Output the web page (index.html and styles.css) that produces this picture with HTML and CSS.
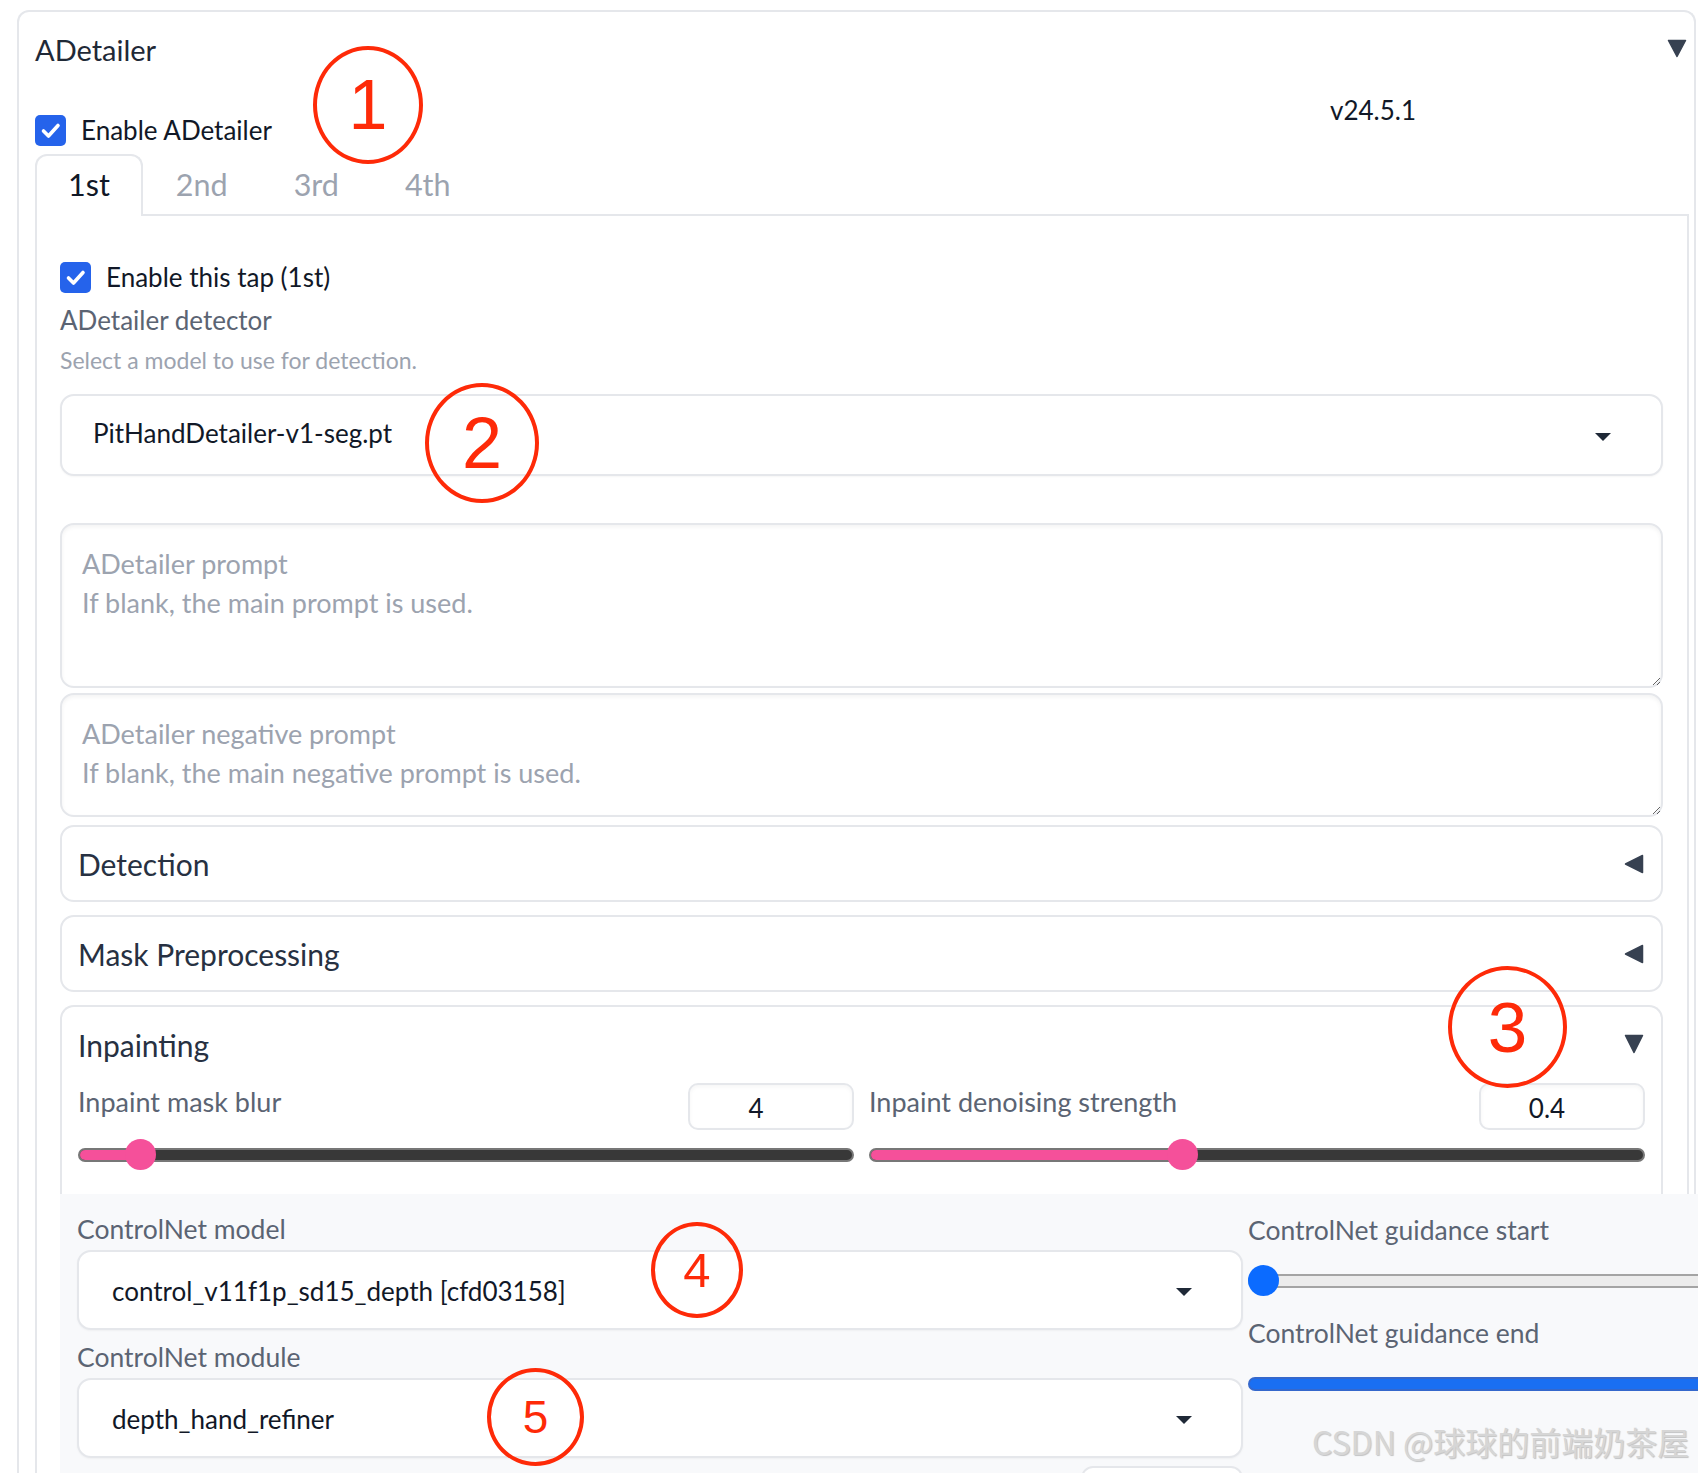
FILE: index.html
```html
<!DOCTYPE html>
<html lang="en">
<head>
<meta charset="utf-8">
<title>ADetailer</title>
<link rel="stylesheet" href="styles.css">
</head>
<body>
<div class="page">
  <section class="panel">
    <header class="panel-head">
      <h2 class="panel-title">ADetailer</h2>
      <svg class="tri tri-head" viewBox="0 0 20 20"><path d="M1.5 2.5 H18.5 L10 18.5 Z"/></svg>
    </header>

    <div class="enable-row">
      <label class="check check-main">
        <span class="box"><svg viewBox="0 0 31 31"><path d="M8.5 16 L13.5 21 L23 10.5"/></svg></span>
        <span class="check-text">Enable ADetailer</span>
      </label>
      <div class="version">v24.5.1</div>
    </div>

    <div class="tabs">
      <nav class="tab-nav">
        <button class="tab active">1st</button>
        <button class="tab">2nd</button>
        <button class="tab">3rd</button>
        <button class="tab">4th</button>
      </nav>

      <div class="tab-body">
        <label class="check">
          <span class="box"><svg viewBox="0 0 31 31"><path d="M8.5 16 L13.5 21 L23 10.5"/></svg></span>
          <span class="check-text">Enable this tap (1st)</span>
        </label>

        <div class="field-label">ADetailer detector</div>
        <div class="info">Select a model to use for detection.</div>

        <div class="dropdown dropdown-main">
          <span class="dropdown-value">PitHandDetailer-v1-seg.pt</span>
          <svg class="caret" viewBox="0 0 16 8"><path d="M0 0 H16 L8 8 Z"/></svg>
        </div>

        <textarea class="prompt tall" placeholder="ADetailer prompt&#10;If blank, the main prompt is used."></textarea>
        <textarea class="prompt short" placeholder="ADetailer negative prompt&#10;If blank, the main negative prompt is used."></textarea>

        <div class="acc acc-detect">
          <div class="acc-head">
            <span class="acc-title">Detection</span>
            <svg class="tri" viewBox="0 0 20 20"><path d="M18.5 1.5 V18.5 L1.5 10 Z"/></svg>
          </div>
        </div>

        <div class="acc acc-mask">
          <div class="acc-head">
            <span class="acc-title">Mask Preprocessing</span>
            <svg class="tri" viewBox="0 0 20 20"><path d="M18.5 1.5 V18.5 L1.5 10 Z"/></svg>
          </div>
        </div>

        <div class="acc acc-inpaint">
          <div class="acc-head">
            <span class="acc-title">Inpainting</span>
            <svg class="tri" viewBox="0 0 20 20"><path d="M1.5 1.5 H18.5 L10 18.5 Z"/></svg>
          </div>
          <div class="acc-body">
            <div class="num-field">
              <div class="num-head">
                <span class="slider-label">Inpaint mask blur</span>
                <div class="num-box">4</div>
              </div>
              <div class="slider pink" style="--p:0.0625">
                <div class="track"><div class="fill"></div></div>
                <div class="thumb"></div>
              </div>
            </div>
            <div class="num-field">
              <div class="num-head">
                <span class="slider-label">Inpaint denoising strength</span>
                <div class="num-box">0.4</div>
              </div>
              <div class="slider pink" style="--p:0.4">
                <div class="track"><div class="fill"></div></div>
                <div class="thumb"></div>
              </div>
            </div>
          </div>
        </div>

        <div class="cn">
          <div class="cn-left">
            <div class="cn-label">ControlNet model</div>
            <div class="dropdown dropdown-cn">
              <span class="dropdown-value">control_v11f1p_sd15_depth [cfd03158]</span>
              <svg class="caret" viewBox="0 0 16 8"><path d="M0 0 H16 L8 8 Z"/></svg>
            </div>
            <div class="cn-label cn-label-2">ControlNet module</div>
            <div class="dropdown dropdown-cn">
              <span class="dropdown-value">depth_hand_refiner</span>
              <svg class="caret" viewBox="0 0 16 8"><path d="M0 0 H16 L8 8 Z"/></svg>
            </div>
            <div class="cn-tail"><div class="cn-small-box"></div></div>
          </div>
          <div class="cn-right">
            <div class="cn-label cn-label-r">ControlNet guidance start</div>
            <div class="slider blue-start" style="--p:0">
              <div class="track"><div class="fill"></div></div>
              <div class="thumb"></div>
            </div>
            <div class="cn-label cn-label-r cn-label-end">ControlNet guidance end</div>
            <div class="slider blue-end" style="--p:1">
              <div class="track"><div class="fill"></div></div>
              <div class="thumb"></div>
            </div>
          </div>
        </div>
      </div>
    </div>
  </section>
</div>

<div class="mark mark-1"><span>1</span></div>
<div class="mark mark-2"><span>2</span></div>
<div class="mark mark-3"><span>3</span></div>
<div class="mark mark-4"><span>4</span></div>
<div class="mark mark-5"><span>5</span></div>

<div class="watermark">CSDN @球球的前端奶茶屋</div>
</body>
</html>
```

FILE: styles.css
```css
* { box-sizing: border-box; }

html, body {
  margin: 0;
  padding: 0;
  overflow: hidden;
}

body {
  position: relative;
  width: 1698px;
  height: 1473px;
  background: #ffffff;
  font-family: Lato, "Noto Sans CJK SC", sans-serif;
  color: #111827;
}

.page {
  height: 1473px;
  overflow: hidden;
  padding: 10px 2px 0 17px;
}

.panel {
  border: 2px solid #e5e7eb;
  border-bottom: 0;
  border-radius: 12px 12px 0 0;
  padding: 12px 5px 0 16px;
  min-height: 1520px;
}

.panel-head {
  display: flex;
  align-items: center;
  justify-content: space-between;
  height: 44px;
}

.panel-title {
  margin: 0;
  padding-top: 8px;
  font-size: 29px;
  font-weight: 400;
  line-height: 36px;
  color: #1f2937;
}

.tri {
  width: 20px;
  height: 20px;
  flex: none;
  fill: #374151;
  stroke: #374151;
  stroke-width: 1.5;
  stroke-linejoin: round;
}

.tri-head {
  margin: 4px 2px 0 0;
}

.enable-row {
  display: flex;
  justify-content: space-between;
  align-items: flex-start;
  margin-top: 22px;
}

.check {
  display: flex;
  align-items: flex-start;
  gap: 15px;
}

.check-main {
  margin-top: 25px;
}

.box {
  width: 31px;
  height: 31px;
  flex: none;
  border-radius: 5px;
  background: #2563eb;
  display: flex;
  align-items: center;
  justify-content: center;
}

.box svg {
  width: 31px;
  height: 31px;
  fill: none;
  stroke: #ffffff;
  stroke-width: 3.6;
  stroke-linecap: round;
  stroke-linejoin: round;
}

.check-text {
  font-size: 26px;
  line-height: 31px;
  color: #111827;
}

.version {
  width: 359px;
  padding-top: 4px;
  font-size: 26px;
  line-height: 32px;
  color: #111827;
}

.tabs {
  margin-top: 8px;
}

.tab-nav {
  display: flex;
  border-bottom: 2px solid #e5e7eb;
}

.tab {
  height: 62px;
  margin: 0 0 -2px 0;
  padding: 0 31px 4px;
  border: 2px solid transparent;
  border-bottom: 0;
  background: transparent;
  font-family: inherit;
  font-size: 30.5px;
  line-height: 40px;
  color: #9ca3af;
  display: flex;
  align-items: center;
}

.tab.active {
  border-color: #e5e7eb;
  border-radius: 12px 12px 0 0;
  background: #ffffff;
  color: #111827;
}

.tab-body {
  border: 2px solid #e5e7eb;
  border-top: 0;
  padding: 46px 24px 0 23px;
  min-height: 1400px;
}

.field-label {
  margin-top: 7px;
  padding-top: 4px;
  font-size: 26px;
  line-height: 32px;
  color: #5b6473;
}

.info {
  margin-top: 6px;
  padding-top: 6px;
  font-size: 23px;
  line-height: 24px;
  color: #9ca3af;
}

.dropdown {
  border: 2px solid #e5e7eb;
  border-radius: 14px;
  background: #ffffff;
  box-shadow: 0 1px 2px rgba(0, 0, 0, 0.04);
  display: flex;
  align-items: center;
  justify-content: space-between;
}

.dropdown-main {
  margin-top: 22px;
  height: 82px;
  padding: 0 50px 0 31px;
}

.dropdown-value {
  font-size: 26px;
  line-height: 36px;
  margin-bottom: 4px;
  color: #111827;
}

.caret {
  width: 16px;
  height: 8px;
  flex: none;
  margin-top: 4px;
  fill: #1f2937;
}

.prompt {
  display: block;
  width: 100%;
  margin: 47px 0 0 0;
  height: 165px;
  padding: 19px 17px 0 20px;
  border: 2px solid #e5e7eb;
  border-radius: 14px;
  font-family: inherit;
  font-size: 27px;
  line-height: 39px;
  color: #111827;
  background: #ffffff;
  box-shadow: inset 0 2px 4px rgba(0, 0, 0, 0.05);
  resize: vertical;
  outline: none;
}

.prompt::placeholder {
  color: #9ca3af;
}

.prompt.short {
  margin-top: 5px;
  height: 124px;
}

.acc {
  border: 2px solid #e5e7eb;
  border-radius: 14px;
  background: #ffffff;
}

.acc-detect { margin-top: 8px; }
.acc-mask { margin-top: 13px; }

.acc-inpaint {
  margin-top: 13px;
  border-bottom: 0;
  border-radius: 14px 14px 0 0;
}

.acc-head {
  height: 73px;
  display: flex;
  align-items: center;
  justify-content: space-between;
  padding: 0 17px 0 16px;
}

.acc-title {
  font-size: 30px;
  line-height: 40px;
  color: #273142;
}

.acc-inpaint .acc-title {
  margin-top: 2px;
}

.acc-body {
  display: grid;
  grid-template-columns: 1fr 1fr;
  column-gap: 15px;
  padding: 3px 16px 24px;
}

.num-head {
  display: flex;
  justify-content: space-between;
  align-items: flex-start;
}

.slider-label {
  padding-top: 2px;
  font-size: 27px;
  line-height: 34px;
  color: #5b6473;
}

.num-box {
  width: 166px;
  height: 47px;
  border: 2px solid #e5e7eb;
  border-radius: 10px;
  background: #ffffff;
  box-shadow: inset 0 2px 4px rgba(0, 0, 0, 0.04);
  display: flex;
  align-items: center;
  justify-content: center;
  padding: 2px 30px 0 0;
  font-size: 26px;
  line-height: 34px;
  color: #111827;
}

.slider {
  position: relative;
  height: 31px;
  display: flex;
  align-items: center;
  margin-top: 9px;
}

.track {
  flex: 1;
  height: 14px;
  border-radius: 7px;
  border: 2px solid #777777;
  background: #383838;
  overflow: hidden;
}

.fill {
  height: 100%;
  width: calc(15.5px + (100% - 31px) * var(--p));
}

.thumb {
  position: absolute;
  top: 0;
  left: calc((100% - 31px) * var(--p));
  width: 31px;
  height: 31px;
  border-radius: 50%;
}

.pink .fill,
.pink .thumb {
  background: #f5509a;
}

.cn {
  margin-right: -100px;
  background: #f8f9fb;
  padding: 15px 0 0 17px;
  display: grid;
  grid-template-columns: 1166px 1fr;
  column-gap: 5px;
  height: 320px;
}

.cn-label {
  padding-top: 4px;
  font-size: 26.5px;
  line-height: 32px;
  color: #5b6473;
}

.cn-label-r {
  padding-top: 6px;
  line-height: 30px;
}

.cn-label-2 {
  margin-top: 7px;
}

.dropdown-cn {
  margin-top: 5px;
  height: 80px;
  padding: 0 49px 0 33px;
}

.dropdown-cn .dropdown-value {
  margin: 2px 0 0 0;
}

.cn-tail {
  display: flex;
  justify-content: flex-end;
  margin-top: 8px;
}

.cn-small-box {
  width: 162px;
  height: 50px;
  border: 2px solid #e5e7eb;
  border-radius: 12px;
  background: #ffffff;
}

.cn-right .slider {
  margin-top: 20px;
}

.cn-label-end {
  margin-top: 16px;
}

.blue-start .track {
  border-color: #a4a4a4;
  background: #ececec;
}

.blue-start .fill {
  background: #1a6ff2;
}

.blue-start .thumb {
  background: #0b6bff;
}

.blue-end .track {
  border-color: #3568cc;
  background: #1a6ff2;
}

.blue-end .fill,
.blue-end .thumb {
  background: #1a6ff2;
}

.mark {
  position: absolute;
  border: 4px solid #fe2a08;
  border-radius: 50%;
  display: flex;
  align-items: center;
  justify-content: center;
  font-family: "Liberation Sans", Arial, sans-serif;
  color: #fe2a08;
  line-height: 1;
}

.mark-1 { left: 313px; top: 46px; width: 110px; height: 118px; font-size: 70px; }
.mark-2 { left: 425px; top: 383px; width: 114px; height: 120px; font-size: 72px; }
.mark-3 { left: 1448px; top: 966px; width: 119px; height: 122px; font-size: 71px; }
.mark-4 { left: 651px; top: 1222px; width: 92px; height: 96px; font-size: 49px; }
.mark-5 { left: 487px; top: 1368px; width: 97px; height: 98px; font-size: 46px; }

.watermark {
  position: absolute;
  left: 1312px;
  top: 1417px;
  font-family: "Noto Sans CJK SC", sans-serif;
  font-size: 32px;
  line-height: 48px;
  white-space: nowrap;
  color: #d6d6d6;
  text-shadow: 1px 1px 1px rgba(0, 0, 0, 0.22);
}
```
